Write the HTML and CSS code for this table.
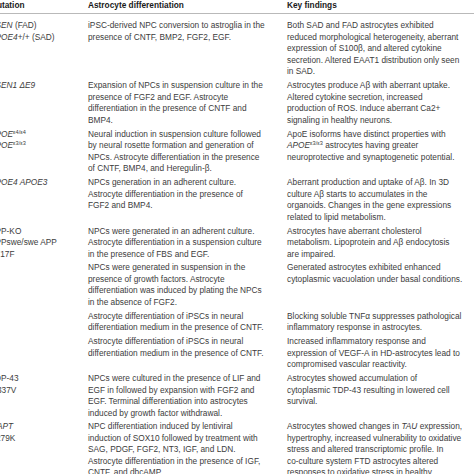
FILE: index.html
```html
<!DOCTYPE html>
<html>
<head>
<meta charset="utf-8">
<link rel="stylesheet" href="styles.css">
</head>
<body>
<div class="table">
  <div class="th">Mutation</div>
  <div class="th">Astrocyte differentiation</div>
  <div class="th">Key findings</div>

  <div class="td first"><i>PSEN</i> (FAD)<br><i>APOE4</i>+/+ (SAD)</div>
  <div class="td first">iPSC-derived NPC conversion to astroglia in the<br>presence of CNTF, BMP2, FGF2, EGF.</div>
  <div class="td first">Both SAD and FAD astrocytes exhibited<br>reduced morphological heterogeneity, aberrant<br>expression of S100β, and altered cytokine<br>secretion. Altered EAAT1 distribution only seen<br>in SAD.</div>

  <div class="td"><i>PSEN1 ΔE9</i></div>
  <div class="td">Expansion of NPCs in suspension culture in the<br>presence of FGF2 and EGF. Astrocyte<br>differentiation in the presence of CNTF and<br>BMP4.</div>
  <div class="td">Astrocytes produce Aβ with aberrant uptake.<br>Altered cytokine secretion, increased<br>production of ROS. Induce aberrant Ca2+<br>signaling in healthy neurons.</div>

  <div class="td"><i>APOE</i><sup>ε4/ε4</sup><br><i>APOE</i><sup>ε3/ε3</sup></div>
  <div class="td">Neural induction in suspension culture followed<br>by neural rosette formation and generation of<br>NPCs. Astrocyte differentiation in the presence<br>of CNTF, BMP4, and Heregulin-β.</div>
  <div class="td">ApoE isoforms have distinct properties with<br><i>APOE</i><sup>ε3/ε3</sup> astrocytes having greater<br>neuroprotective and synaptogenetic potential.</div>

  <div class="td"><i>APOE4 APOE3</i></div>
  <div class="td">NPCs generation in an adherent culture.<br>Astrocyte differentiation in the presence of<br>FGF2 and BMP4.</div>
  <div class="td">Aberrant production and uptake of Aβ. In 3D<br>culture Aβ starts to accumulates in the<br>organoids. Changes in the gene expressions<br>related to lipid metabolism.</div>

  <div class="td">APP-KO<br>APPswe/swe APP<br>V717F</div>
  <div class="td">NPCs were generated in an adherent culture.<br>Astrocyte differentiation in a suspension culture<br>in the presence of FBS and EGF.</div>
  <div class="td">Astrocytes have aberrant cholesterol<br>metabolism. Lipoprotein and Aβ endocytosis<br>are impaired.</div>

  <div class="td"></div>
  <div class="td">NPCs were generated in suspension in the<br>presence of growth factors. Astrocyte<br>differentiation was induced by plating the NPCs<br>in the absence of FGF2.</div>
  <div class="td">Generated astrocytes exhibited enhanced<br>cytoplasmic vacuolation under basal conditions.</div>

  <div class="td"></div>
  <div class="td">Astrocyte differentiation of iPSCs in neural<br>differentiation medium in the presence of CNTF.</div>
  <div class="td">Blocking soluble TNFα suppresses pathological<br>inflammatory response in astrocytes.</div>

  <div class="td"></div>
  <div class="td">Astrocyte differentiation of iPSCs in neural<br>differentiation medium in the presence of CNTF.</div>
  <div class="td">Increased inflammatory response and<br>expression of VEGF-A in HD-astrocytes lead to<br>compromised vascular reactivity.</div>

  <div class="td">TDP-43<br>M337V</div>
  <div class="td">NPCs were cultured in the presence of LIF and<br>EGF in followed by expansion with FGF2 and<br>EGF. Terminal differentiation into astrocytes<br>induced by growth factor withdrawal.</div>
  <div class="td">Astrocytes showed accumulation of<br>cytoplasmic TDP-43 resulting in lowered cell<br>survival.</div>

  <div class="td"><i>MAPT</i><br>N279K</div>
  <div class="td">NPC differentiation induced by lentiviral<br>induction of SOX10 followed by treatment with<br>SAG, PDGF, FGF2, NT3, IGF, and LDN.<br>Astrocyte differentiation in the presence of IGF,<br>CNTF, and dbcAMP</div>
  <div class="td">Astrocytes showed changes in <i>TAU</i> expression,<br>hypertrophy, increased vulnerability to oxidative<br>stress and altered transcriptomic profile. In<br>co-culture system FTD astrocytes altered<br>responses to oxidative stress in healthy<br>neurons.</div>
</div>
</body>
</html>
```
FILE: styles.css
```css
html, body {
  margin: 0;
  padding: 0;
  background: #ffffff;
  overflow: hidden;
  width: 474px;
  height: 474px;
}

.table {
  display: grid;
  grid-template-columns: 98px 199px 200px;
  margin-left: -10px;
  font-family: "Liberation Sans", Arial, sans-serif;
  font-size: 8.3px;
  line-height: 11.5px;
  color: #3c3c3c;
}

.th {
  font-weight: bold;
  color: #1a1a1a;
  line-height: 8.3px;
  padding-top: 0.6px;
  padding-bottom: 4.4px;
  border-bottom: 1px solid #b9b9b9;
  white-space: nowrap;
}

.td {
  white-space: nowrap;
  padding-bottom: 2.4px;
}

.td.first {
  padding-top: 6.2px;
}

sup {
  font-size: 5.6px;
  line-height: 0;
  vertical-align: 3px;
}
```
